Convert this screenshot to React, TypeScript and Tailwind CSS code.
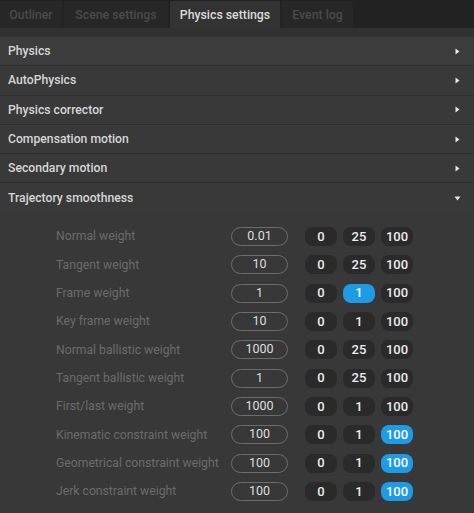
import React from "react";

const tabs = [
  { label: "Outliner", w: "w-[62px]", active: false },
  { label: "Scene settings", w: "w-[104px]", active: false },
  { label: "Physics settings", w: "w-[110px]", active: true },
  { label: "Event log", w: "w-[71px]", active: false },
];

const sections = [
  "Physics",
  "AutoPhysics",
  "Physics corrector",
  "Compensation motion",
  "Secondary motion",
];

type Row = { label: string; value: string; opts: string[]; active: number };

const rows: Row[] = [
  { label: "Normal weight", value: "0.01", opts: ["0", "25", "100"], active: -1 },
  { label: "Tangent weight", value: "10", opts: ["0", "25", "100"], active: -1 },
  { label: "Frame weight", value: "1", opts: ["0", "1", "100"], active: 1 },
  { label: "Key frame weight", value: "10", opts: ["0", "1", "100"], active: -1 },
  { label: "Normal ballistic weight", value: "1000", opts: ["0", "25", "100"], active: -1 },
  { label: "Tangent ballistic weight", value: "1", opts: ["0", "25", "100"], active: -1 },
  { label: "First/last weight", value: "1000", opts: ["0", "1", "100"], active: -1 },
  { label: "Kinematic constraint weight", value: "100", opts: ["0", "1", "100"], active: 2 },
  { label: "Geometrical constraint weight", value: "100", opts: ["0", "1", "100"], active: 2 },
  { label: "Jerk constraint weight", value: "100", opts: ["0", "1", "100"], active: 2 },
];

function RightArrow() {
  return (
    <svg width="5" height="7" viewBox="0 0 5 7" className="mr-[14px]">
      <path d="M0.5 0.5 L4.5 3.5 L0.5 6.5 Z" fill="#e6e6e6" />
    </svg>
  );
}

function DownArrow() {
  return (
    <svg width="7" height="5" viewBox="0 0 7 5" className="mr-[13px]">
      <path d="M0.5 0.5 L6.5 0.5 L3.5 4.5 Z" fill="#e6e6e6" />
    </svg>
  );
}

export default function App() {
  return (
    <div
      className="w-[474px] h-[513px] overflow-hidden bg-[#383838] flex flex-col"
      style={{ fontFamily: "Roboto, 'Noto Sans', sans-serif" }}
    >
      {/* Tab bar */}
      <div className="h-[28px] bg-[#222222] flex items-end shrink-0">
        {tabs.map((t, i) => (
          <div
            key={i}
            className={`${t.w} h-[27px] mr-[2px] flex items-center justify-center pt-[2px] text-[12.3px] font-medium ${
              t.active ? "bg-[#333333] text-[#dcdcdc]" : "bg-[#272727] text-[#4b4b4b]"
            }`}
          >
            {t.label}
          </div>
        ))}
      </div>
      <div className="h-[9px] bg-[#313131] shrink-0" />
      {/* Collapsed sections */}
      {sections.map((s, i) => (
        <div
          key={i}
          className={`h-[29.3px] shrink-0 flex items-center justify-between pl-[8px] border-b border-[#2e2e2e] ${
            i === 0 ? "bg-[#3c3c3c]" : "bg-[#393939]"
          }`}
        >
          <span className="text-[12.2px] font-medium text-[#d6d6d6]">{s}</span>
          <RightArrow />
        </div>
      ))}
      <div className="h-[29.3px] shrink-0 flex items-center justify-between pl-[8px] bg-[#393939]">
        <span className="text-[12.2px] font-medium text-[#d6d6d6]">Trajectory smoothness</span>
        <DownArrow />
      </div>
      {/* Expanded content */}
      <div className="flex flex-col pt-[9.5px] bg-[#383838]">
        {rows.map((r, i) => (
          <div key={i} className="h-[28.33px] flex items-center pl-[56px]">
            <span className="w-[175px] text-[12.2px] text-[#6b6b6b]">{r.label}</span>
            <div className="w-[57px] h-[19px] rounded-full border border-[#6c6c6c] flex items-center justify-center text-[12.5px] text-[#dedede]">
              {r.value}
            </div>
            <div className="flex gap-[6px] ml-[17px]">
              {r.opts.map((o, j) => (
                <div
                  key={j}
                  className={`w-[32px] h-[19px] rounded-[8px] flex items-center justify-center text-[13px] font-medium ${
                    j === r.active ? "bg-[#1d9be6] text-white" : "bg-[#2a2a2a] text-[#ececec]"
                  }`}
                >
                  {o}
                </div>
              ))}
            </div>
          </div>
        ))}
      </div>
    </div>
  );
}
